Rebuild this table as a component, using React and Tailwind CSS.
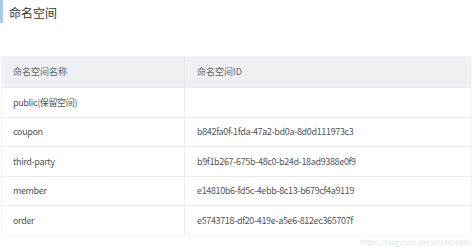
const rows = [
  { name: 'public(保留空间)', id: '' },
  { name: 'coupon', id: 'b842fa0f-1fda-47a2-bd0a-8d0d111973c3' },
  { name: 'third-party', id: 'b9f1b267-675b-48c0-b24d-18ad9388e0f9' },
  { name: 'member', id: 'e14810b6-fd5c-4ebb-8c13-b679cf4a9119' },
  { name: 'order', id: 'e5743718-df20-419e-a5e6-812ec365707f' },
];

export default function App() {
  return (
    <div
      className="w-[474px] h-[247px] bg-white overflow-hidden text-[#333]"
      style={{ fontFamily: '"Noto Sans CJK SC", "Noto Sans", sans-serif' }}
    >
      {/* 标题 */}
      <div className="flex items-center h-[26px]">
        <div className="w-[3px] h-[23px] bg-[#a9cbee] self-start" />
        <span className="ml-[6px] text-[12px] leading-none text-[#333]">命名空间</span>
      </div>

      {/* 命名空间列表 */}
      <div className="mt-[31px] mx-[2px] w-[469px] shadow-[0_0_2px_rgba(0,0,0,0.12)]">
        <div className="grid grid-cols-[183px_1fr] h-[30px] bg-[#eef0f3] text-[9px] text-[#666]">
          <div className="flex items-center pl-[11px] border-r border-[#e4e6ea]">命名空间名称</div>
          <div className="flex items-center pl-[12px]">命名空间ID</div>
        </div>
        {rows.map((r) => (
          <div
            key={r.name}
            className="grid grid-cols-[183px_1fr] h-[29.5px] border-t border-[#ebedf0] text-[9px] text-[#555] tracking-[-0.35px]"
          >
            <div className="flex items-center pl-[11px] border-r border-[#ebedf0]">{r.name}</div>
            <div className="flex items-center pl-[12px]">{r.id}</div>
          </div>
        ))}
      </div>

      <div className="flex justify-end pr-[3px] mt-[4px]">
        <span className="text-[7px] leading-none text-[#e2e2e2]">https://blog.csdn.net/u014496893</span>
      </div>
    </div>
  );
}
